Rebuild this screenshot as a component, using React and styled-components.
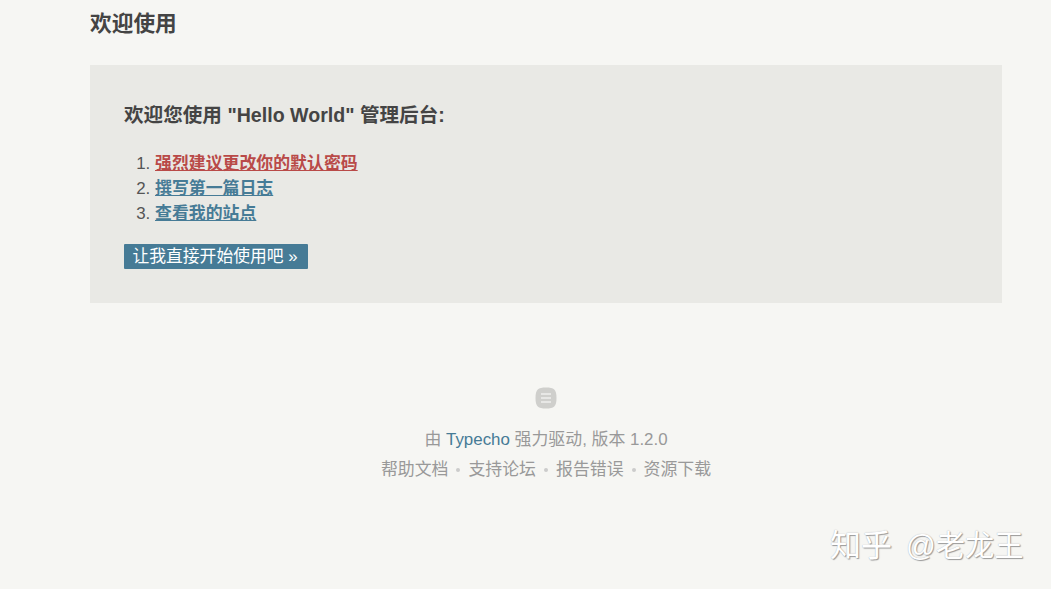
import React from "react";
import styled, { createGlobalStyle } from "styled-components";

const GlobalStyle = createGlobalStyle`
  html, body {
    margin: 0;
    padding: 0;
    background: #f6f6f3;
  }
  body {
    font-family: "Liberation Sans", "Noto Sans CJK SC", sans-serif;
    font-size: 16.9px;
    color: #444;
    overflow: hidden;
  }
`;

const Page = styled.div`
  position: relative;
  height: 589px;
  overflow: hidden;
`;

const Main = styled.main`
  width: 912px;
  margin-left: 90px;
`;

const PageTitle = styled.h2`
  margin: 0;
  padding-top: 9px;
  height: 65px;
  box-sizing: border-box;
  font-size: 21.7px;
  line-height: 30px;
  font-weight: 700;
  color: #444;
`;

const Card = styled.section`
  box-sizing: border-box;
  height: 238px;
  padding: 35px 34px 34px;
  background: #e9e9e5;
`;

const CardTitle = styled.h3`
  margin: 0 0 21px;
  font-size: 19.6px;
  line-height: 30px;
  font-weight: 700;
  color: #444;
`;

const Steps = styled.ol`
  margin: 0 0 18px;
  padding-left: 31px;
  line-height: 25px;
  font-size: 16.9px;
  color: #555;
`;

const StepLink = styled.a`
  color: ${(p) => (p.$danger ? "#b94a48" : "#467b96")};
  font-weight: 700;
  text-decoration: underline;
`;

const StartButton = styled.button`
  display: block;
  box-sizing: border-box;
  width: 184px;
  height: 25px;
  padding: 0 2px 0 0;
  border: 0;
  border-radius: 1px;
  background: #467b96;
  color: #fff;
  font: inherit;
  font-size: 16.8px;
  line-height: 25px;
  text-align: center;
`;

const Footer = styled.footer`
  display: flex;
  flex-direction: column;
  align-items: center;
  margin-top: 84px;
  color: #999;
  font-size: 16.9px;
  line-height: 30px;
`;

const Logo = styled.svg`
  width: 22px;
  height: 22px;
  margin-bottom: 16px;
`;

const FooterLine = styled.div`
  display: flex;
  align-items: center;
  white-space: pre;
`;

const FooterLink = styled.a`
  color: ${(p) => (p.$accent ? "#467b96" : "#999")};
`;

const Dot = styled.span`
  width: 4px;
  height: 4px;
  margin: 0 8px;
  border-radius: 50%;
  background: #ccc;
`;

const Watermark = styled.div`
  position: absolute;
  left: 830px;
  top: 527px;
  display: flex;
  align-items: baseline;
  gap: 14px;
  color: #fff;
  font-size: 29.3px;
  line-height: 38px;
  white-space: pre;
  text-shadow: 1px 1px 1px #999, 0 0 1px #aaa;
`;

const WatermarkBrand = styled.span`
  font-size: 31px;
`;

const helpLinks = ["帮助文档", "支持论坛", "报告错误", "资源下载"];

const App = () => (
  <Page>
    <GlobalStyle />
    <Main>
      <PageTitle>欢迎使用</PageTitle>
      <Card>
        <CardTitle>欢迎您使用 "Hello World" 管理后台:</CardTitle>
        <Steps>
          <li>
            <StepLink $danger>强烈建议更改你的默认密码</StepLink>
          </li>
          <li>
            <StepLink>撰写第一篇日志</StepLink>
          </li>
          <li>
            <StepLink>查看我的站点</StepLink>
          </li>
        </Steps>
        <StartButton>让我直接开始使用吧 »</StartButton>
      </Card>
      <Footer>
        <Logo viewBox="0 0 22 22">
          <path
            d="M11 0.5c8 0 10.5 2 10.5 10.5S19 21.5 11 21.5 0.5 19.500 0.5 11 3 0.5 11 0.5z"
            fill="#cfcfcc"
          />
          <path
            d="M6 7h10M6 11h10M6 15h10"
            stroke="#f0f0ed"
            strokeWidth="1.7"
            fill="none"
          />
        </Logo>
        <FooterLine>
          由 <FooterLink $accent>Typecho</FooterLink> 强力驱动, 版本 1.2.0
        </FooterLine>
        <FooterLine>
          {helpLinks.map((label, i) => (
            <React.Fragment key={label}>
              {i > 0 && <Dot />}
              <FooterLink>{label}</FooterLink>
            </React.Fragment>
          ))}
        </FooterLine>
      </Footer>
    </Main>
    <Watermark>
      <WatermarkBrand>知乎</WatermarkBrand>
      <span>@老龙王</span>
    </Watermark>
  </Page>
);

export default App;
